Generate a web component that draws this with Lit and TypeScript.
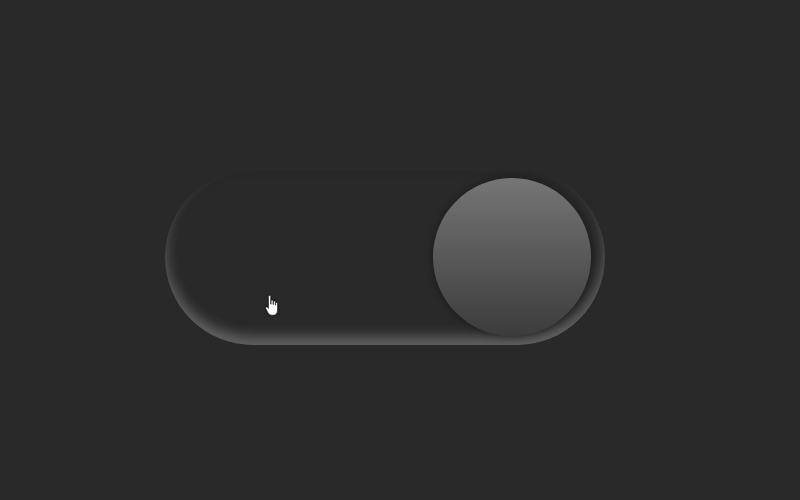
import { LitElement, html, css } from "lit";
import { customElement } from "lit/decorators.js";

@customElement("app-root")
export class AppRoot extends LitElement {
  static styles = css`
    :host { display: block; width: 800px; height: 500px; background: #292929; overflow: hidden; }
    .page { width: 800px; height: 500px; box-sizing: border-box; padding: 169px 0 0 165px; }
    .track {
      position: relative; width: 440px; height: 176px; border-radius: 88px; box-sizing: border-box;
      background: #292929; display: flex; align-items: center; justify-content: flex-end; padding-right: 14px;
      box-shadow: inset 0 -8px 13px rgba(255,255,255,0.28), inset 0 4px 6px rgba(0,0,0,0.1);
    }
    .knob {
      width: 158px; height: 158px; border-radius: 50%;
      background: linear-gradient(180deg, #757575 0%, #3c3c3c 100%);
      box-shadow: 0 0 9px rgba(0,0,0,0.4);
    }
    .cursor { position: absolute; left: 98px; top: 124px; width: 19px; height: 26px; display: block; filter: drop-shadow(0 0 1px rgba(0,0,0,.6)); }
  `;
  render() {
    return html`<div class="page"><div class="track"><div class="knob"></div>
      <svg class="cursor" viewBox="0 0 16 24"><path d="M4.3 3.2c0-1.2 2-1.2 2 0v7l.4.2V7.2c0-1 1.8-1 1.8 0v3.4l.3.1V8.1c0-1 1.8-1 1.8 0v3l.3.1V9.4c0-.9 1.7-.9 1.7 0v6.7c0 2.6-1.5 4.4-4.3 4.4-2.3 0-3.6-.8-4.6-2.6L1.8 14.3c-.5-1.1.9-1.9 1.7-1l.8 1z" fill="#fff" stroke="#111" stroke-width=".5"/></svg>
    </div></div>`;
  }
}
